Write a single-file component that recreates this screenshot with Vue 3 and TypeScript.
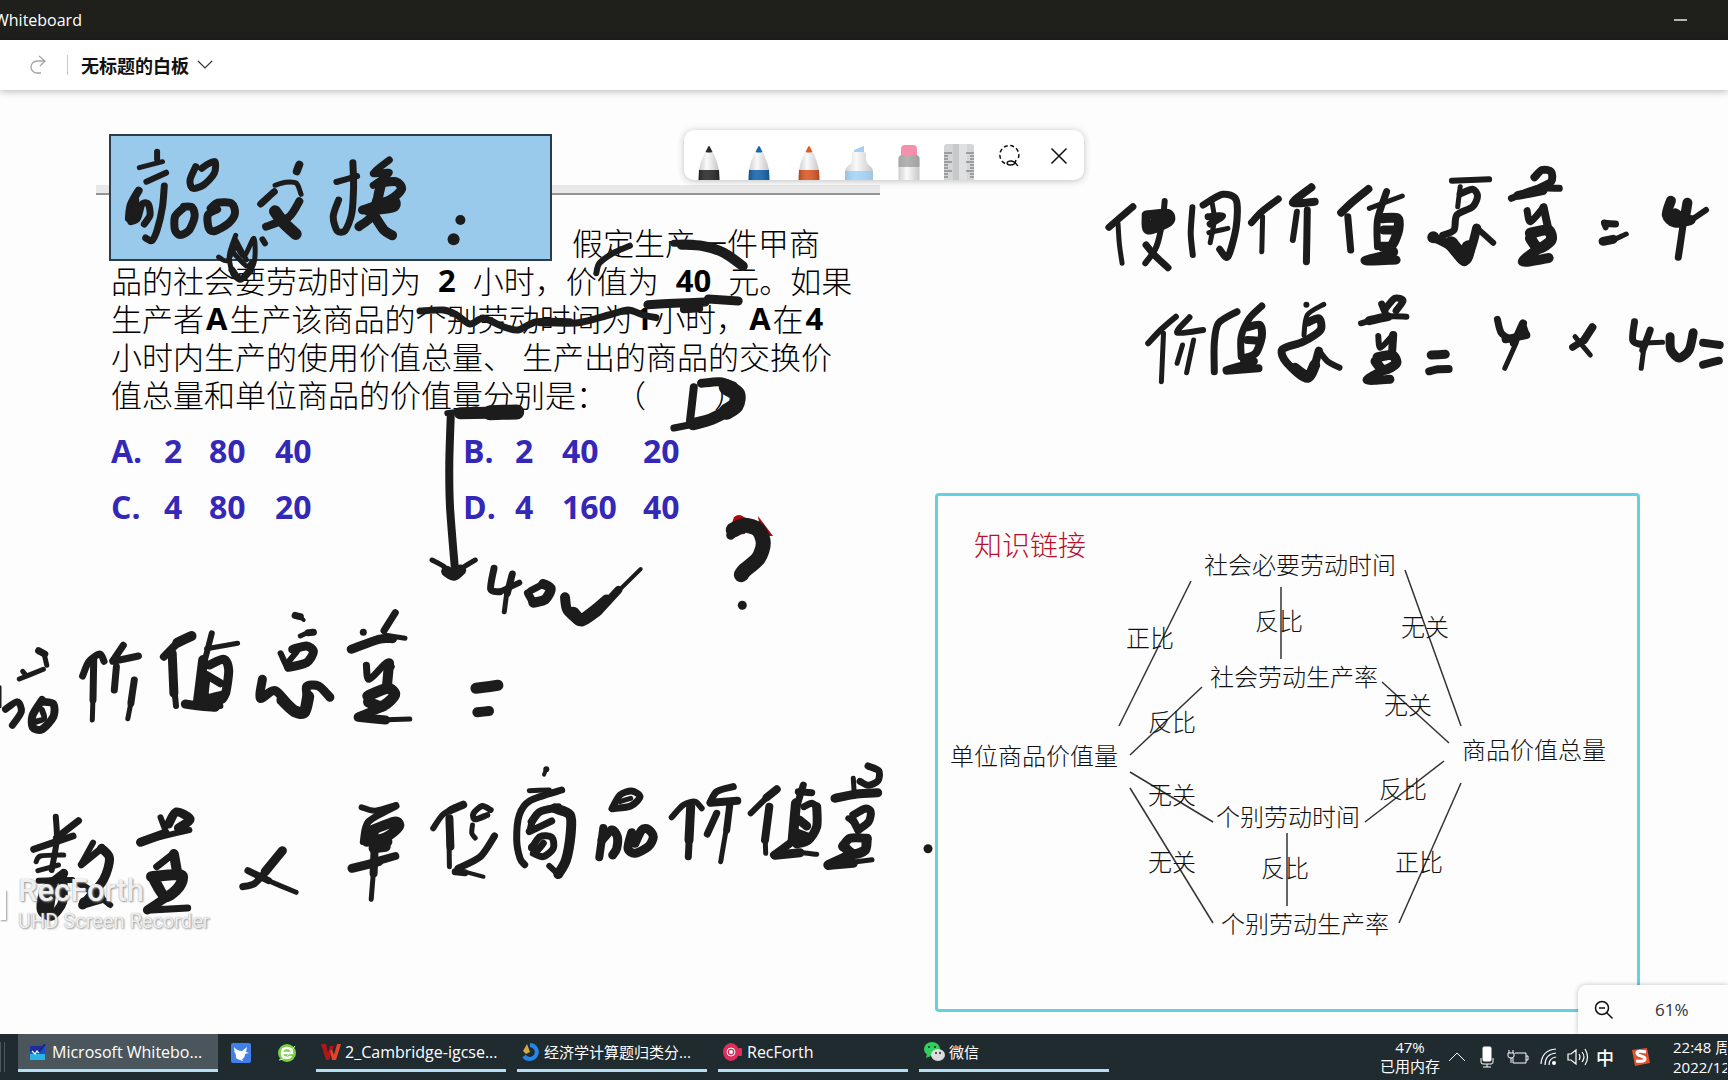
<script setup lang="ts">
interface InkSheet {
  x: number
  y: number
  sx: number
  sy: number
  strokes: string[]
}

// Each stroke: "pen width | x,y x,y ..." in the units of its sheet.
const sheets: InkSheet[] = [
  {
    x: 0, y: -90, sx: 2.8, sy: 3,
    strokes: [
      '5|440,455 440,478', '4|390,503 455,485', '5|410,545 465,518',
      '7|388,572 366,615 361,655', '6|366,665 385,655 398,612 415,612 420,645 404,672',
      '6|380,600 380,650', '6|460,558 455,620 440,690 425,722 408,714',
      '6|548,500 532,540 540,565 570,555 600,520 602,485 582,492 565,505',
      '7|512,625 490,650 490,690 505,705 530,690 545,650 538,622 515,620',
      '7|608,628 582,645 585,685 602,693 640,670 658,640 648,610 610,608 590,625',
      '7|838,494 831,514', '6|768,575 730,612', '4|770,556 800,547 830,550 843,583',
      '7|838,604 808,652 745,680', '11|770,634 794,668 828,702',
      '5|942,546 1000,528', '6|988,488 990,560 985,640 966,692 944,692 933,650 948,600',
      '6|1090,480 1045,520 1090,518 1045,556', '8|1060,550 1108,545 1124,568 1090,600 1015,630',
      '9|1065,560 1060,606 1104,604 1100,622 1030,632', '8|1055,600 1040,650 1005,680', '9|1050,650 1075,690 1098,706',
      '9|1289,660', '11|1270,718',
      '4|660,706 642,768 655,828 686,832 712,785 711,715 684,768 660,742 636,782 612,771',
      '4|655,760 690,798 705,786', '6|650,810 672,838 700,812', '5|735,718 742,730', '4|660,720 690,780',
    ],
  },
  {
    x: 540, y: 10, sx: 2.613, sy: 3,
    strokes: [
      '5|235,437 190,460 155,490 147,520', '6|350,430 400,430', '9|370,434 425,438 480,458 530,498',
      '6|0,668 100,668 180,645 230,630 270,645 303,653',
      '8|282,614 350,610 432,606', '7|376,628 416,625', '8|440,597 518,603',
      '7|402,862 392,962', '8|422,850 470,845 505,858', '15|488,862 515,882 512,915 488,935',
      '11|510,922 450,956 400,973', '6|430,966 350,984',
    ],
  },
  {
    x: 90, y: 140, sx: 3, sy: 3,
    strokes: [
      '6|990,243 1060,240 1100,255 1140,282 1180,265 1240,290 1285,300 1340,275 1440,275',
      '5|1072,550 1160,538', '11|1110,550 1278,547', '14|1200,548 1280,546',
    ],
  },
  {
    x: 400, y: 290, sx: 3, sy: 3,
    strokes: [
      '7|152,112 148,250 150,380 165,570', '4|96,540 130,558 160,590 190,562 226,540',
      '10|140,574 162,586 182,570',
      '6|282,565 272,628 300,635', '5|300,635 358,608', '6|337,582 322,640', '4|320,640 313,695',
      '7|384,640 400,668', '9|400,668 436,658 452,626 430,612', '6|430,612 392,632',
      '9|495,652 502,690 535,722', '12|520,700 545,720 590,690', '10|560,712 620,660', '7|600,690 655,630', '3|640,648 722,567',
      '8|992,466 1008,446', '14|1000,450 1035,436 1075,450 1090,490 1075,535 1035,570 1024,584', '8|1027,676',
    ],
  },
  {
    x: 1080, y: -90, sx: 2.42, sy: 3,
    strokes: [
      '6|128,620 100,650 70,682', '4|92,670 95,730 102,790',
      '5|205,603 200,660 185,740 158,790', '8|160,645 212,640 216,665 165,690 160,650', '9|180,668 210,655', '6|160,735 180,765 213,803',
      '5|272,622 268,700 273,765', '6|298,615 345,583 378,600 378,680 358,770 338,748',
      '4|320,610 325,660 315,728', '6|310,650 345,648 315,672', '4|312,698 358,685',
      '6|480,597 440,635 415,668', '4|442,650 440,755', '7|560,562 515,608 568,605', '5|525,635 515,720', '6|550,630 548,785',
      '7|698,567 660,605 632,638', '6|648,650 655,750', '4|700,625 780,588', '6|742,575 720,660 720,740',
      '9|730,655 768,655 770,690 755,735 732,740', '8|735,690 760,690', '8|735,740 758,758 690,782 765,780',
      '5|900,542 990,538', '4|920,560 914,620', '6|920,582 950,568 962,588 950,620 912,645 905,690 878,706',
      '11|855,712', '8|862,716 895,738 930,785 948,740 960,684', '5|960,684 1000,728', '13|898,730 930,774 940,742',
      '7|1100,532 1118,510 1140,515 1140,545 1108,566', '6|1044,595 1105,566 1160,565', '8|1060,586 1120,572',
      '6|1082,632 1090,665 1122,622', '7|1122,622 1132,680', '10|1090,700 1132,690 1140,720 1110,745 1090,715', '9|1110,745 1072,785 1134,774',
      '6|1270,670 1296,672', '5|1268,668 1272,682', '8|1266,724 1290,718', '4|1290,720 1322,702',
      '9|1430,602 1420,645 1440,668 1478,660', '5|1470,668 1515,630', '9|1470,608 1462,665', '6|1460,670 1448,772', '9|1440,640 1465,660',
      '5|232,950 195,990 165,1030', '4|202,1000 197,1145', '5|265,952 235,998 298,990', '4|248,1035 235,1090', '4|275,1020 258,1118',
      '6|380,935 335,970 325,1030 325,1115', '6|440,918 410,955 390,1010 390,1070', '7|405,982 435,975 440,1010 425,1060 396,1075',
      '7|405,1020 430,1022', '7|397,1080 420,1085 355,1110', '7|355,1112 432,1105',
      '5|548,914', '4|590,913 550,945 542,1005', '7|550,968 578,955 582,990 540,1025 490,1048 500,1088 552,1136 578,1052', '5|578,1052 600,1085 628,1103', '10|520,1105 552,1130 568,1095',
      '6|730,912 738,936', '6|740,925 762,895 782,902 765,932', '5|680,970 740,950 790,950', '8|700,962 745,950',
      '5|722,1008 727,1043 758,1005', '7|758,1005 755,1060', '9|720,1072 755,1065 765,1090 735,1110 715,1084', '8|735,1110 695,1140 750,1138',
      '8|850,1065 884,1063', '7|845,1114 866,1108 892,1107',
      '6|1010,958 1020,1000 1045,1020', '7|1030,1018 1080,1005', '5|1072,970 1080,1000', '7|1072,970 1050,1030', '4|1055,1030 1028,1105',
      '7|1240,982 1220,1020', '6|1220,1020 1192,1042', '4|1198,1010 1235,1065',
      '6|1342,965 1338,1022 1365,1036', '4|1350,1030 1410,1027', '6|1380,990 1362,1050', '4|1364,1050 1358,1105',
      '8|1428,1010 1430,1050 1450,1074 1474,1050 1484,998', '7|1508,1028 1548,1035', '7|1508,1094 1546,1082',
    ],
  },
  {
    x: 0, y: 510, sx: 2.904, sy: 3,
    strokes: [
      '2|0,260 0,320', '6|16,328 50,305 62,335 36,376', '7|122,300 95,345 95,382 122,388 155,350 155,312 125,305',
      '5|122,330 128,355 105,365', '6|112,152 130,162', '4|128,162 136,196', '4|56,237 126,208', '4|66,214 74,224',
      '6|302,184 290,162 258,185 240,228', '6|272,180 270,300', '4|270,290 268,360', '6|358,136 328,182', '6|328,184 402,168', '6|338,200 332,270', '6|390,240 380,310', '4|382,300 371,356',
      '9|556,108 515,128', '7|520,124 476,170', '8|500,160 505,280', '5|506,260 511,318', '5|615,100 595,180', '9|590,180 575,305',
      '4|600,146 690,130', '8|608,195 650,178 664,210 655,280 640,300', '12|592,235 590,300 642,292', '7|600,225 640,250',
      '8|538,312 580,318 625,322', '5|600,322 640,318',
      '6|857,46 872,50', '3|870,50 882,60', '4|872,108 895,98', '6|895,98 910,97', '5|815,160 835,205', '8|838,202 890,188 910,155 890,138 850,148', '5|838,185 862,155',
      '8|762,238 756,295 800,272 850,332', '11|820,300 856,334 884,335 895,290', '8|895,300 890,260 925,258 958,292',
      '6|1055,97', '6|1148,38 1115,92', '8|1020,148 1100,118 1140,116', '4|1120,106 1176,115',
      '6|1064,196 1072,238 1122,188 1136,200', '9|1130,190 1124,255', '10|1068,288 1125,265 1146,285 1110,318 1070,306', '8|1114,320 1042,350', '8|1040,352 1120,360', '4|1100,360 1190,357',
      '10|1382,265 1446,256', '9|1386,337 1420,333',
      '5|162,650 165,720 150,810', '6|228,662 164,714', '6|98,748 212,708', '4|105,785 118,768 185,765', '4|110,812 170,795',
      '8|185,820 130,870 120,930 150,948 182,905 182,830', '5|112,842 210,840', '11|150,850 140,920', '5|270,728 236,792',
      '6|236,794 295,745', '8|295,745 318,775 300,840 240,915', '6|230,850 290,890', '5|290,890 320,915', '10|245,908 290,895',
      '5|466,652 480,690', '8|490,672 512,636 552,658 518,684', '8|408,727 480,700', '5|460,712 550,690',
      '6|455,800 505,760', '9|505,762 515,820', '10|440,830 525,825 520,860 480,890 448,840', '8|485,890 428,930', '6|440,930 545,924',
      '8|820,752 770,815', '6|780,805 740,850 705,860', '6|720,812 780,842', '4|770,838 860,877',
      '5|1050,622 1090,632 1150,615', '6|1150,618 1070,665 1055,725', '9|1070,695 1145,665 1158,680 1120,712 1065,725',
      '9|1085,700 1085,735 1125,725', '9|1085,745 1120,740', '8|1022,805 1100,785', '7|1090,785 1148,768', '7|1088,740 1085,820', '4|1084,820 1078,898',
      '7|1345,614 1310,630', '5|1320,622 1285,645 1258,685', '4|1303,650 1305,800', '7|1305,655 1308,740',
      '5|1425,630 1400,618 1375,640 1380,658 1415,645', '4|1372,675 1370,700 1380,714', '6|1436,708 1395,770 1330,805', '6|1322,815 1350,818', '3|1350,815 1404,830',
    ],
  },
  {
    x: 500, y: 650, sx: 3, sy: 3,
    strokes: [
      '5|139,88', '3|139,88 132,104', '4|88,152 148,150', '6|185,150 90,182 58,225 50,300 60,355 74,374',
      '7|95,245 120,215 175,202', '9|165,205 210,225 212,280 198,360 175,402', '5|176,404 148,378', '6|88,275 155,243', '6|90,272 96,245',
      '6|95,325 120,290 155,292 160,325 130,350 100,340', '6|95,320 110,332 130,310',
      '6|336,206 360,165 395,153 420,170 392,198 338,206', '4|360,185 392,175',
      '7|310,264 298,352', '8|306,300 335,270 352,290 350,325 338,345', '8|395,278 384,325 405,340 445,320 460,290 445,268 425,270 405,310',
      '5|515,232 550,195 585,185 605,205', '8|572,200 567,300', '6|568,290 565,350', '6|700,140 650,155 630,188', '7|632,188 712,182', '6|650,220 622,282', '6|690,190 680,270', '4|680,260 662,365',
      '7|830,148 800,172', '5|808,165 752,220', '7|808,200 795,300', '4|795,280 797,340', '6|910,135 890,200', '9|888,190 878,300', '6|895,155 935,158',
      '6|912,200 935,190 950,200', '8|950,200 950,260 925,300 890,312', '8|898,240 920,258', '10|885,280 925,295', '7|870,310 822,345', '8|825,346 900,338', '4|880,335 950,343',
      '6|1104,78 1136,92 1134,122 1105,136 1080,124', '4|1060,115 1062,150', '8|1005,175 1070,162 1133,158',
      '5|1045,235 1066,250', '7|1060,225 1095,206 1112,215 1106,245 1075,270', '7|1060,242 1075,270', '8|1028,320 1050,295 1102,295', '9|1100,300 1095,330 1060,342 1030,318', '9|1050,345 985,375', '8|990,376 1060,370', '4|1050,368 1116,359',
      '8|1284,326',
    ],
  },
]

function toPath(points: [number, number][]): string {
  const f = (n: number) => n.toFixed(1)
  const first = points[0]
  let d = `M${f(first[0])} ${f(first[1])}`
  if (points.length === 1) return `${d}L${f(first[0])} ${f(first[1])}`
  for (let i = 0; i < points.length - 1; i++) {
    const p0 = points[Math.max(0, i - 1)]
    const p1 = points[i]
    const p2 = points[i + 1]
    const p3 = points[Math.min(points.length - 1, i + 2)]
    const c1 = [p1[0] + (p2[0] - p0[0]) / 7, p1[1] + (p2[1] - p0[1]) / 7]
    const c2 = [p2[0] - (p3[0] - p1[0]) / 7, p2[1] - (p3[1] - p1[1]) / 7]
    d += `C${f(c1[0])} ${f(c1[1])} ${f(c2[0])} ${f(c2[1])} ${f(p2[0])} ${f(p2[1])}`
  }
  return d
}

const pressure = 1

const ink = sheets.flatMap((sheet) =>
  sheet.strokes.map((stroke) => {
    const [width, list] = stroke.split('|')
    const points = list.split(' ').map((pair): [number, number] => {
      const [x, y] = pair.split(',').map(Number)
      return [sheet.x + x / sheet.sx, sheet.y + y / sheet.sy]
    })
    return { width: Number(width) + pressure, d: toPath(points) }
  }),
)

const nodes = [
  { t: '社会必要劳动时间', x: 266, y: 78 },
  { t: '社会劳动生产率', x: 272, y: 190 },
  { t: '单位商品价值量', x: 12, y: 269 },
  { t: '个别劳动时间', x: 278, y: 330 },
  { t: '个别劳动生产率', x: 283, y: 437 },
  { t: '商品价值总量', x: 524, y: 263 },
  { t: '正比', x: 188, y: 151 },
  { t: '反比', x: 317, y: 134 },
  { t: '反比', x: 210, y: 235 },
  { t: '无关', x: 210, y: 308 },
  { t: '无关', x: 210, y: 375 },
  { t: '反比', x: 323, y: 381 },
  { t: '无关', x: 463, y: 140 },
  { t: '无关', x: 446, y: 218 },
  { t: '反比', x: 441, y: 302 },
  { t: '正比', x: 457, y: 375 },
]

const links = [
  [253, 85, 181, 230], [343, 91, 343, 163], [264, 191, 192, 259], [192, 276, 275, 326],
  [192, 292, 275, 427], [349, 337, 349, 410], [467, 74, 523, 230], [444, 186, 511, 247],
  [506, 265, 427, 326], [523, 287, 461, 427],
]

const answers = [
  ['A.', '2', '80', '40', 'B.', '2', '40', '20'],
  ['C.', '4', '80', '20', 'D.', '4', '160', '40'],
]

const pens = [
  { name: '黑色笔', color: '#2b2b2b' },
  { name: '蓝色笔', color: '#1766b0' },
  { name: '橙色笔', color: '#dd5a26' },
]
</script>

<template>
  <div class="screen">
    <header class="titlebar">
      <span class="app-name">Whiteboard</span>
      <button class="minimize" aria-label="最小化"></button>
    </header>

    <nav class="toolbar">
      <button class="redo" aria-label="重做">
        <svg width="18" height="20" viewBox="0 0 18 20"><path d="M10 1l6 5-5 5M15 6H8a6 6 0 0 0 0 12h4" fill="none" stroke="#a5a5a5" stroke-width="1.300" /></svg>
      </button>
      <span class="divider"></span>
      <button class="board-name">
        <span>无标题的白板</span>
        <svg width="16" height="10" viewBox="0 0 16 10"><path d="M1 1l7 7 7-7" fill="none" stroke="#333" stroke-width="1.200" /></svg>
      </button>
    </nav>

    <main class="canvas">
      <div class="slide-rule"></div>

      <section class="question">
        <p class="line first"><span>假定生产一件甲商</span></p>
        <p class="line wide"><span>品的社会要劳动时间为</span><b>2</b><span>小时，价值为</span><b>40</b><span>元。如果</span></p>
        <p class="line tight"><span>生产者</span><b>A</b><span>生产该商品的个别劳动时间为</span><b>1</b><span>小时，</span><b>A</b><span>在</span><b>4</b></p>
        <p class="line half"><span>小时内生产的使用价值总量、</span><span>生产出的商品的交换价</span></p>
        <p class="line half"><span>值总量和单位商品的价值量分别是：</span><span>（</span><span class="close">）</span></p>
        <div class="answers">
          <template v-for="(row, r) in answers" :key="r">
            <span v-for="(cell, c) in row" :key="c">{{ cell }}</span>
          </template>
        </div>
      </section>

      <div class="card"></div>

      <section class="diagram">
        <svg width="100%" height="100%">
          <line v-for="(l, i) in links" :key="i" :x1="l[0]" :y1="l[1]" :x2="l[2]" :y2="l[3]" stroke="#333" stroke-width="1.500" />
          <text class="heading" x="36" y="60">知识链接</text>
          <text v-for="(n, i) in nodes" :key="i" class="node" :x="n.x" :y="n.y">{{ n.t }}</text>
        </svg>
      </section>

      <svg class="ink" aria-label="手写笔迹">
        <path d="M732 433l2-6q5-4 10 0l5 3-4 14-11 1zM758 426l15 20h-12z" fill="#b5060c" />
        <path
          v-for="(s, i) in ink"
          :key="i"
          :d="s.d"
          :stroke-width="s.width"
          fill="none"
          stroke="#1c1c1c"
          stroke-linecap="round"
          stroke-linejoin="round"
        />
      </svg>

      <div class="watermark">
        <span class="wm-box"></span>
        <div>
          <div class="wm-name">RecForth</div>
          <div class="wm-sub">UHD Screen Recorder</div>
        </div>
      </div>

      <div class="pens">
        <svg width="0" height="0" class="defs">
          <defs>
            <linearGradient id="body"><stop offset="0" stop-color="#cfcfcf" /><stop offset=".4" stop-color="#fafafa" /><stop offset="1" stop-color="#c6c6c6" /></linearGradient>
            <linearGradient id="shade"><stop offset="0" stop-color="#000" stop-opacity=".25" /><stop offset=".4" stop-color="#fff" stop-opacity=".1" /><stop offset="1" stop-color="#000" stop-opacity=".2" /></linearGradient>
          </defs>
        </svg>
        <button v-for="p in pens" :key="p.name" :aria-label="p.name">
          <svg width="50" height="50" viewBox="0 0 50 50">
            <path d="M15 40C17 30 20 25 22 20h6c2 5 5 10 7 20z" fill="url(#body)" />
            <path d="M21.500 22L24 17q1-2 2 0l2.500 5q-3.500 1-7 0z" :fill="p.color" />
            <path d="M14.500 50L15 40h20l.5 10z" :fill="p.color" />
            <path d="M14.500 50L15 40h20l.5 10z" fill="url(#shade)" />
          </svg>
        </button>
        <button aria-label="荧光笔">
          <svg width="50" height="50" viewBox="0 0 50 50">
            <path d="M20 24v-4l10-4v8z" fill="#a5cff2" />
            <path d="M11 50V42q0-4 3-6 4-3 4-7v-5q0-2 2-2h10q2 0 2 2v5q0 4 4 7 3 2 3 6v8z" fill="url(#body)" />
            <path d="M11 50V41h28v9z" fill="#a9d7fa" /><path d="M11 50V41h28v9z" fill="url(#shade)" opacity=".4" />
          </svg>
        </button>
        <button aria-label="橡皮擦">
          <svg width="50" height="50" viewBox="0 0 50 50">
            <path d="M17 26v-7q0-4 4-4h8q4 0 4 4v7z" fill="#f58fae" />
            <path d="M14.500 50V29q0-4 4-4h13q4 0 4 4v21z" fill="url(#body)" />
            <path d="M14.500 37V29q0-4 4-4h13q4 0 4 4v8z" fill="#8d8d8d" opacity=".65" />
          </svg>
        </button>
        <button aria-label="标尺">
          <svg width="50" height="50" viewBox="0 0 50 50">
            <path d="M10 50V17q0-3 3-3h24q3 0 3 3v33z" fill="#d3d6d7" /><path d="M19 14h6v36h-6z" fill="#c6cacb" /><path d="M25 14h8v36h-8z" fill="#dee0e1" />
            <path d="M10 23h8M10 26h4M10 29h4M10 32h8M10 35h4M10 38h4M10 41h8M10 44h4M10 47h4M40 23h-8M40 26h-4M40 29h-4M40 32h-8M40 35h-4M40 38h-4M40 41h-8M40 44h-4M40 47h-4" stroke="#666" />
          </svg>
        </button>
        <button aria-label="套索选择">
          <svg width="50" height="50" viewBox="0 0 50 50" fill="none" stroke="#111" stroke-width="1.500">
            <path d="M21 33.500A9.500 9.500 0 1 1 34 29" stroke-dasharray="4 2.500" />
            <path d="M34 36c-2-2-3-5-7-5-5 0-5 4-1 4 4 0 5-1 6-5" />
          </svg>
        </button>
        <button aria-label="关闭">
          <svg width="50" height="50" viewBox="0 0 50 50"><path d="M17.500 18.500l15 15M32.500 18.500l-15 15" stroke="#111" stroke-width="1.500" /></svg>
        </button>
      </div>

      <div class="zoom">
        <button aria-label="缩小">
          <svg width="20" height="20" viewBox="0 0 20 20" fill="none" stroke="#111" stroke-width="1.500"><circle cx="8" cy="8" r="6.500" /><path d="M5 8h6M12.500 12.500l6 6" /></svg>
        </button>
        <span>61%</span>
      </div>
    </main>

    <footer class="taskbar">
      <span class="grip"></span>
      <button class="task active">
        <svg width="16" height="16" viewBox="0 0 16 16"><path d="M0 2h12l3-2v14q0 2-2 2H0z" fill="#1a4fd0" /><path d="M0 10h15v6H0z" fill="#27b3e6" /><path d="M0 2h12l-3 6H0z" fill="#1d2f9c" /><path d="M2 7l3 3 2-3 2 2" fill="none" stroke="#fff" stroke-width="1.200" /><path d="M9 8l6-8" stroke="#16267e" stroke-width="2" /></svg>
        <span>Microsoft Whitebo...</span>
      </button>
      <button class="pin" aria-label="飞鸟">
        <svg width="20" height="20" viewBox="0 0 20 20"><rect width="20" height="20" rx="2" fill="#4180e8" /><path d="M3 4q3 4 8 4l5-4-1 5 3 1-4 1q0 4-3 5l1 2-6-2q-2-2-1-4-2-3-2-8z" fill="#fff" /></svg>
      </button>
      <button class="pin" aria-label="浏览器">
        <svg width="20" height="20" viewBox="0 0 20 20"><circle cx="10" cy="10" r="9" fill="#79cf45" /><path d="M5 10h10q0-5-5-5t-5 5 5 5q3 0 4-2" fill="none" stroke="#fff" stroke-width="2.500" /><path d="M2 17Q9 17 18 3" fill="none" stroke="#e2f7c9" stroke-width="1" /></svg>
      </button>
      <button class="task">
        <svg width="20" height="18" viewBox="0 0 20 18"><path d="M0 1h5l2 9 2-7h4l-5 14H5z" fill="#b51518" /><path d="M9 7l2 0 2 5 3-11h4l-5 16h-4z" fill="#e5432a" /></svg>
        <span>2_Cambridge-igcse...</span>
      </button>
      <button class="task han">
        <svg width="18" height="20" viewBox="0 0 18 20"><path d="M8 3a7 7 0 1 1-6 11" fill="none" stroke="#2586ea" stroke-width="4" /><path d="M1 9l4-7 3 8-4 2z" fill="#d3a945" /></svg>
        <span>经济学计算题归类分...</span>
      </button>
      <button class="task">
        <svg width="20" height="20" viewBox="0 0 20 20"><ellipse cx="8" cy="10" rx="8" ry="9" fill="#dd2f5d" /><rect x="15" y="6" width="4" height="8" rx="1" fill="#dd2f5d" /><circle cx="8" cy="10" r="4" fill="none" stroke="#fff" /><circle cx="8" cy="10" r="2" fill="#fff" /></svg>
        <span>RecForth</span>
      </button>
      <button class="task han">
        <svg width="21" height="20" viewBox="0 0 21 20"><ellipse cx="8" cy="7" rx="8" ry="7" fill="#2fd05e" /><path d="M3 12l-1 4 5-2z" fill="#2fd05e" /><ellipse cx="14" cy="13" rx="7" ry="6" fill="#dcdcdc" /><g fill="#1f2b2e"><circle cx="5" cy="5" r="1" /><circle cx="11" cy="5" r="1" /><circle cx="12" cy="11" r="1" /><circle cx="16" cy="11" r="1" /></g></svg>
        <span>微信</span>
      </button>

      <div class="tray">
        <div class="memory"><div>47%</div><div>已用内存</div></div>
        <svg class="t-up" width="18" height="10" viewBox="0 0 18 10"><path d="M1 9l8-8 8 8" /></svg>
        <svg class="t-mic" width="14" height="22" viewBox="0 0 14 22"><rect x="3" y="1" width="8" height="14" rx="1" fill="#fff" /><path d="M1 12v4q0 2 2 2h8q2 0 2-2v-4M7 18v3M3 21h8" /></svg>
        <svg class="t-bat" width="22" height="16" viewBox="0 0 22 16"><path d="M8 4h11v10H6V9M19 7h2v4h-2M2 1v3M6 1v3M1 4h6v3q0 2-3 2T1 7zM4 9v5" /></svg>
        <svg class="t-wifi" width="18" height="18" viewBox="0 0 18 18"><path d="M1 16Q2 2 16 1M5 17Q5 6 16 5M9 17q0-7 7-8" stroke-width="1.200" /><circle cx="14" cy="15" r="2" fill="#fff" stroke="none" /></svg>
        <svg class="t-vol" width="22" height="18" viewBox="0 0 22 18"><path d="M1 6h3l5-4v14l-5-4H1zM12 6q2 3 0 6M15 4q4 5 0 10M18 1q5 8 0 16" stroke-width="1.200" /></svg>
        <span class="ime">中</span>
        <svg class="t-sogou" width="20" height="20" viewBox="0 0 20 20"><path d="M1 3l15-2 3 15-15 3z" fill="#e0512d" /><path d="M15 5q-9-2-9 1 0 2 4 3t4 3q0 3-9 2" fill="none" stroke="#fff" stroke-width="3" /></svg>
        <div class="clock"><div>22:48 周</div><div>2022/12</div></div>
      </div>
    </footer>
  </div>
</template>

<style>
body {
  margin: 0;
  background: #fdfdfd;
}
</style>

<style scoped>
.screen {
  display: flex;
  flex-direction: column;
  min-height: 100vh;
  overflow: hidden;
  font-family: "Open Sans", "Noto Sans CJK SC", sans-serif;
  color: #111;
}
button {
  border: 0;
  padding: 0;
  background: none;
  font: inherit;
  color: inherit;
  display: flex;
  align-items: center;
  cursor: pointer;
}
.titlebar {
  height: 40px;
  display: flex;
  align-items: center;
  justify-content: space-between;
  background: #1f1f1c;
  color: #fff;
  font-size: 16px;
}
.app-name {
  margin-left: -6px;
}
.minimize {
  width: 54px;
  height: 40px;
}
.minimize::before {
  content: "";
  width: 13px;
  height: 2px;
  background: #b5b5b5;
}
.toolbar {
  height: 50px;
  display: flex;
  align-items: center;
  padding-left: 29px;
  background: #fff;
  box-shadow: 0 1px 8px rgba(0, 0, 0, 0.3);
  z-index: 2;
}
.divider {
  width: 1px;
  height: 20px;
  margin: 0 13px 0 20px;
  background: #c8c8c8;
}
.board-name {
  gap: 8px;
  font-size: 18px;
  font-weight: 700;
}
.canvas {
  position: relative;
  flex: 1;
  min-height: 944px;
  overflow: hidden;
  background: #fdfdfd;
}
.slide-rule {
  position: absolute;
  left: 96px;
  top: 95px;
  width: 784px;
  height: 10px;
  box-sizing: border-box;
  background: #e8e8e8;
  border-bottom: 2px solid #949494;
}
.question {
  position: absolute;
  left: 111px;
  top: 133px;
}
.line {
  display: flex;
  margin: 0;
  height: 38px;
  line-height: 38px;
  font-size: 31px;
  font-weight: 300;
  white-space: nowrap;
  font-family: "Noto Sans CJK SC", sans-serif;
  color: #000;
}
.line b {
  font-family: "Open Sans", sans-serif;
  font-weight: 700;
}
.first {
  padding-left: 461px;
}
.wide {
  gap: 17px;
}
.tight {
  gap: 2px;
}
.half {
  gap: 8px;
}
.close {
  padding-left: 60px;
}
.answers {
  display: grid;
  grid-template-columns: 53px 45px 66px 188px 52px 47px 81px auto;
  grid-auto-rows: 56px;
  align-items: center;
  margin-top: 9px;
  color: #3428b8;
  font-size: 32px;
  font-weight: 700;
}
.card {
  position: absolute;
  left: 109px;
  top: 44px;
  width: 443px;
  height: 127px;
  box-sizing: border-box;
  background: #9acaeb;
  border: 2px solid #2b3d49;
}
.diagram {
  position: absolute;
  left: 935px;
  top: 403px;
  width: 699px;
  height: 513px;
  border: 3px solid #66cfe0;
  border-radius: 4px;
}
.diagram text {
  font-family: "Noto Sans CJK SC", sans-serif;
  font-weight: 300;
}
.heading {
  font-size: 28px;
  fill: #b8102c;
}
.node {
  font-size: 24px;
  fill: #111;
}
.ink {
  position: absolute;
  inset: 0;
  width: 100%;
  height: 100%;
}
.watermark {
  position: absolute;
  left: 0;
  top: 785px;
  display: flex;
  align-items: center;
  gap: 12px;
  font-family: Roboto, sans-serif;
  color: rgba(255, 255, 255, 0.85);
  text-shadow: 0 0 1px #999, 1px 1px 2px #999;
}
.wm-box {
  width: 6px;
  height: 30px;
  box-sizing: border-box;
  border: 3px solid #fff;
  border-left: 0;
  box-shadow: 1px 1px 2px #999;
}
.wm-name {
  font-size: 31px;
  line-height: 32px;
  font-weight: 500;
}
.wm-sub {
  font-size: 20px;
  line-height: 28px;
}
.pens {
  position: absolute;
  left: 684px;
  top: 40px;
  display: flex;
  background: #fff;
  border-radius: 10px;
  overflow: hidden;
  box-shadow: 0 1px 7px rgba(0, 0, 0, 0.25);
}
.defs {
  position: absolute;
}
.zoom {
  position: absolute;
  right: 0;
  bottom: 0;
  width: 134px;
  height: 49px;
  padding-left: 16px;
  display: flex;
  align-items: center;
  gap: 41px;
  background: #fdfdfd;
  border-top-left-radius: 8px;
  box-shadow: 0 0 5px rgba(0, 0, 0, 0.25);
  font-size: 17px;
  color: #333;
}
.taskbar {
  height: 46px;
  display: flex;
  align-items: flex-start;
  background: #1f2b2f;
  color: #fff;
  font-size: 15px;
  white-space: nowrap;
}
.grip {
  width: 3px;
  height: 30px;
  margin: 8px 13px 0 0;
  border: solid #4b575c;
  border-width: 0 1px;
}
.task {
  box-sizing: border-box;
  width: 190px;
  height: 38px;
  margin-right: 11px;
  padding: 0 5px;
  gap: 4px;
  border-bottom: 3px solid #b4def3;
  font-size: 16px;
}
.han {
  font-size: 15px;
}
.active {
  width: 200px;
  margin-right: 13px;
  padding-left: 12px;
  gap: 6px;
  background: #4a565b;
}
.pin {
  width: 20px;
  height: 38px;
  margin-right: 26px;
}
.pin + .task {
  margin-left: -7px;
}
.tray {
  display: flex;
  align-items: center;
  height: 46px;
  margin-left: auto;
  width: 348px;
  flex: none;
}
.tray svg {
  flex: none;
  fill: none;
  stroke: #fff;
}
.tray .t-sogou {
  stroke: none;
  margin-right: 22px;
}
.memory {
  width: 60px;
  text-align: center;
  line-height: 19px;
}
.t-up {
  margin: 0 14px 0 8px;
}
.t-mic {
  margin-right: 13px;
}
.t-bat {
  margin-right: 11px;
}
.t-wifi {
  margin-right: 9px;
}
.t-vol {
  margin-right: 7px;
}
.ime {
  font-size: 18px;
  font-weight: 500;
  margin-right: 17px;
}
.clock {
  width: 54px;
  overflow: hidden;
  line-height: 20px;
}
</style>
